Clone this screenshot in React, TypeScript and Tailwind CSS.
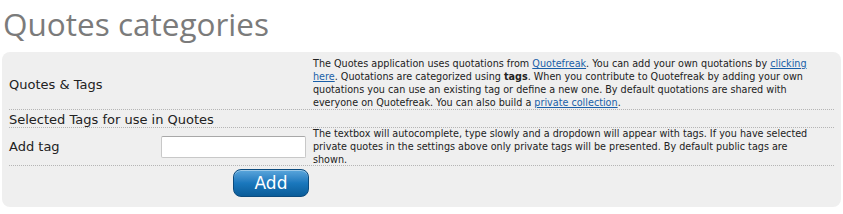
export default function App() {
  const desc = "text-[9.65px] leading-[13px] text-[#222] whitespace-nowrap font-['DejaVu_Sans',Verdana,sans-serif]";
  const link = 'text-[#1a5fa8] underline';
  const label = "text-[13px] text-[#222] font-['DejaVu_Sans',Verdana,sans-serif]";

  return (
    <div className="w-[843px] h-[214px] bg-white overflow-hidden">
      <h1 className="pl-[3px] pt-[3px] h-[52px] text-[31.5px] leading-[42px] text-[#7b7b7b] font-['Open_Sans',sans-serif]">
        Quotes categories
      </h1>

      <div className="mx-[2px] h-[155px] rounded-[8px] bg-[#efefef] px-[7px] pt-[5px]">
        <div className="grid grid-cols-[152px_152px_520px] border-b border-dotted border-[#b5b5b5]">
          <div className={`col-span-2 flex items-center pt-[3px] ${label}`}>Quotes &amp; Tags</div>
          <p className={desc}>
            The Quotes application uses quotations from <a className={link}>Quotefreak</a>. You can add your own
            quotations by <a className={link}>clicking<br />here</a>. Quotations are categorized using <b>tags</b>. When you
            contribute to Quotefreak by adding your own
            <br />
            quotations you can use an existing tag or define a new one. By default quotations are shared with
            <br />
            everyone on Quotefreak. You can also build a <a className={link}>private collection</a>.
          </p>
        </div>

        <div className="grid grid-cols-[152px_152px_520px] h-[18px] border-b border-dotted border-[#b5b5b5]">
          <div className={`col-span-2 flex items-center ${label}`}>Selected Tags for use in Quotes</div>
          <div />
        </div>

        <div className="grid grid-cols-[152px_152px_520px] h-[38px] border-b border-dotted border-[#b5b5b5]">
          <div className={`flex items-center ${label}`}>Add tag</div>
          <div className="flex items-center">
            <input
              type="text"
              className="w-[145px] h-[22px] bg-white border border-[#c8c8c8] border-t-[#a8a8a8] rounded-[2px] outline-none"
            />
          </div>
          <p className={`${desc} -mt-[1px]`}>
            The textbox will autocomplete, type slowly and a dropdown will appear with tags. If you have selected
            <br />
            private quotes in the settings above only private tags will be presented. By default public tags are
            <br />
            shown.
          </p>
        </div>

        <div className="grid grid-cols-[152px_152px_520px] pt-[3px]">
          <div />
          <div className="flex justify-end pr-[4px]">
            <button className="w-[76px] h-[28px] rounded-[8px] border border-[#0b4b7e] bg-gradient-to-b from-[#5aa6dc] via-[#1a78bd] to-[#0a5c99] text-white text-[17px] leading-none font-['DejaVu_Sans',sans-serif] shadow-[inset_0_1px_0_rgba(255,255,255,0.4)]">
              Add
            </button>
          </div>
          <div />
        </div>
      </div>
    </div>
  );
}
